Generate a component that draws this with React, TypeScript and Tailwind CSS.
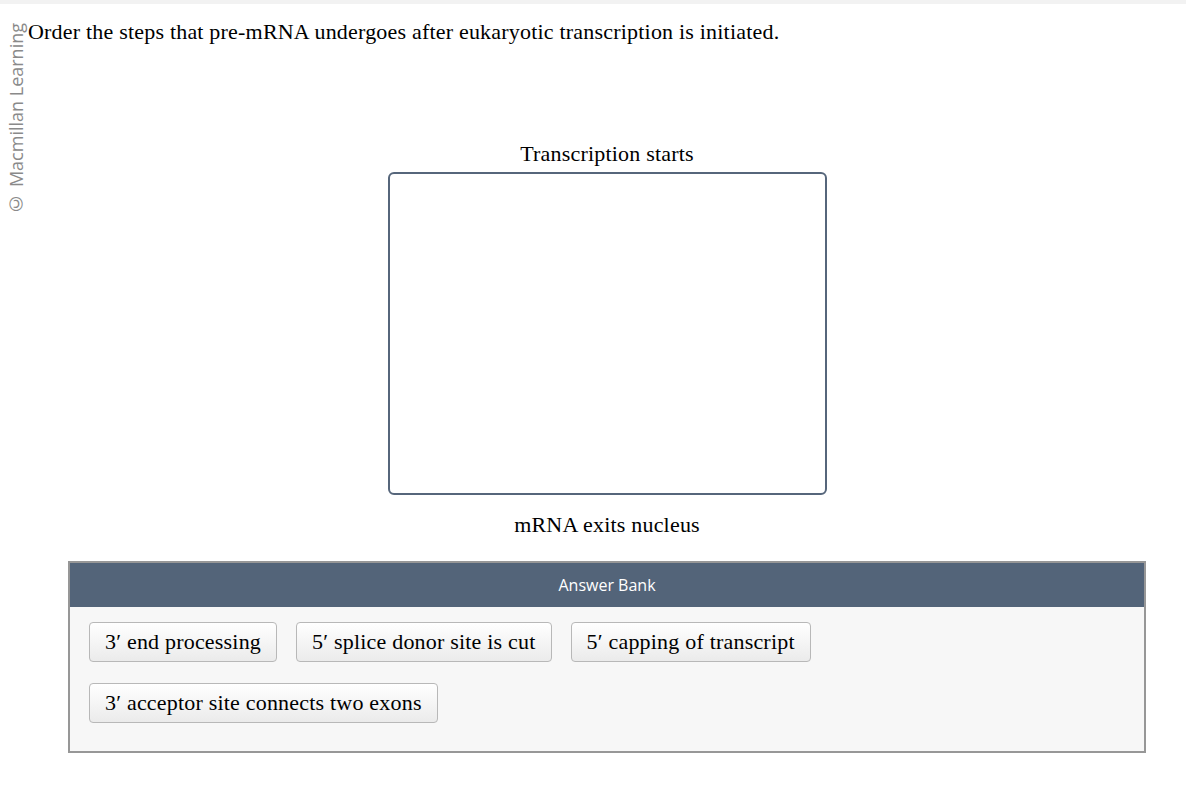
const bank = [
  "3\u2032 end processing",
  "5\u2032 splice donor site is cut",
  "5\u2032 capping of transcript",
  "3\u2032 acceptor site connects two exons",
];

const serif = "font-['Liberation_Serif','Times_New_Roman',serif] tracking-[0.2px]";

export default function App() {
  return (
    <div className="min-h-[785px] bg-white text-black">
      <div className="h-[4px] bg-[#f2f2f2]" />
      <div className="flex">
        {/* copyright strip on the left edge */}
        <div className="w-[28px] shrink-0 pt-[19px] pl-[4px]">
          <div className="rotate-180 font-['Open_Sans',sans-serif] text-[18px] leading-[24px] text-[#8a8a8a] whitespace-nowrap [writing-mode:vertical-rl]">
            © Macmillan Learning
          </div>
        </div>

        <div className={`flex-1 ${serif}`}>
          <p className="mt-[15px] text-[22px] leading-[26px]">
            Order the steps that pre-mRNA undergoes after eukaryotic transcription is initiated.
          </p>

          <div className="flex flex-col items-center">
            <p className="mt-[96px] text-[22px] leading-[26px]">Transcription starts</p>
            <div className="mt-[5px] h-[323px] w-[439px] rounded-[6px] border-2 border-[#56667b] bg-white" />
            <p className="mt-[17px] text-[22px] leading-[26px]">mRNA exits nucleus</p>
          </div>

          <div className="mx-[40px] mt-[23px] border-2 border-[#979797]">
            <div className="flex h-[44px] items-center justify-center bg-[#536479] font-['Open_Sans',sans-serif] text-[16px] tracking-normal text-white">
              Answer Bank
            </div>
            <div className="flex flex-wrap gap-x-[19px] gap-y-[21px] bg-[#f7f7f7] pt-[15px] pr-[19px] pb-[28px] pl-[19px]">
              {bank.map((t) => (
                <div
                  key={t}
                  className="flex h-[40px] items-center rounded-[4px] border border-[#b8b8b8] bg-gradient-to-b from-white to-[#ebebeb] px-[15px] text-[22px] leading-[26px]"
                >
                  {t}
                </div>
              ))}
            </div>
          </div>
        </div>
      </div>
    </div>
  );
}
